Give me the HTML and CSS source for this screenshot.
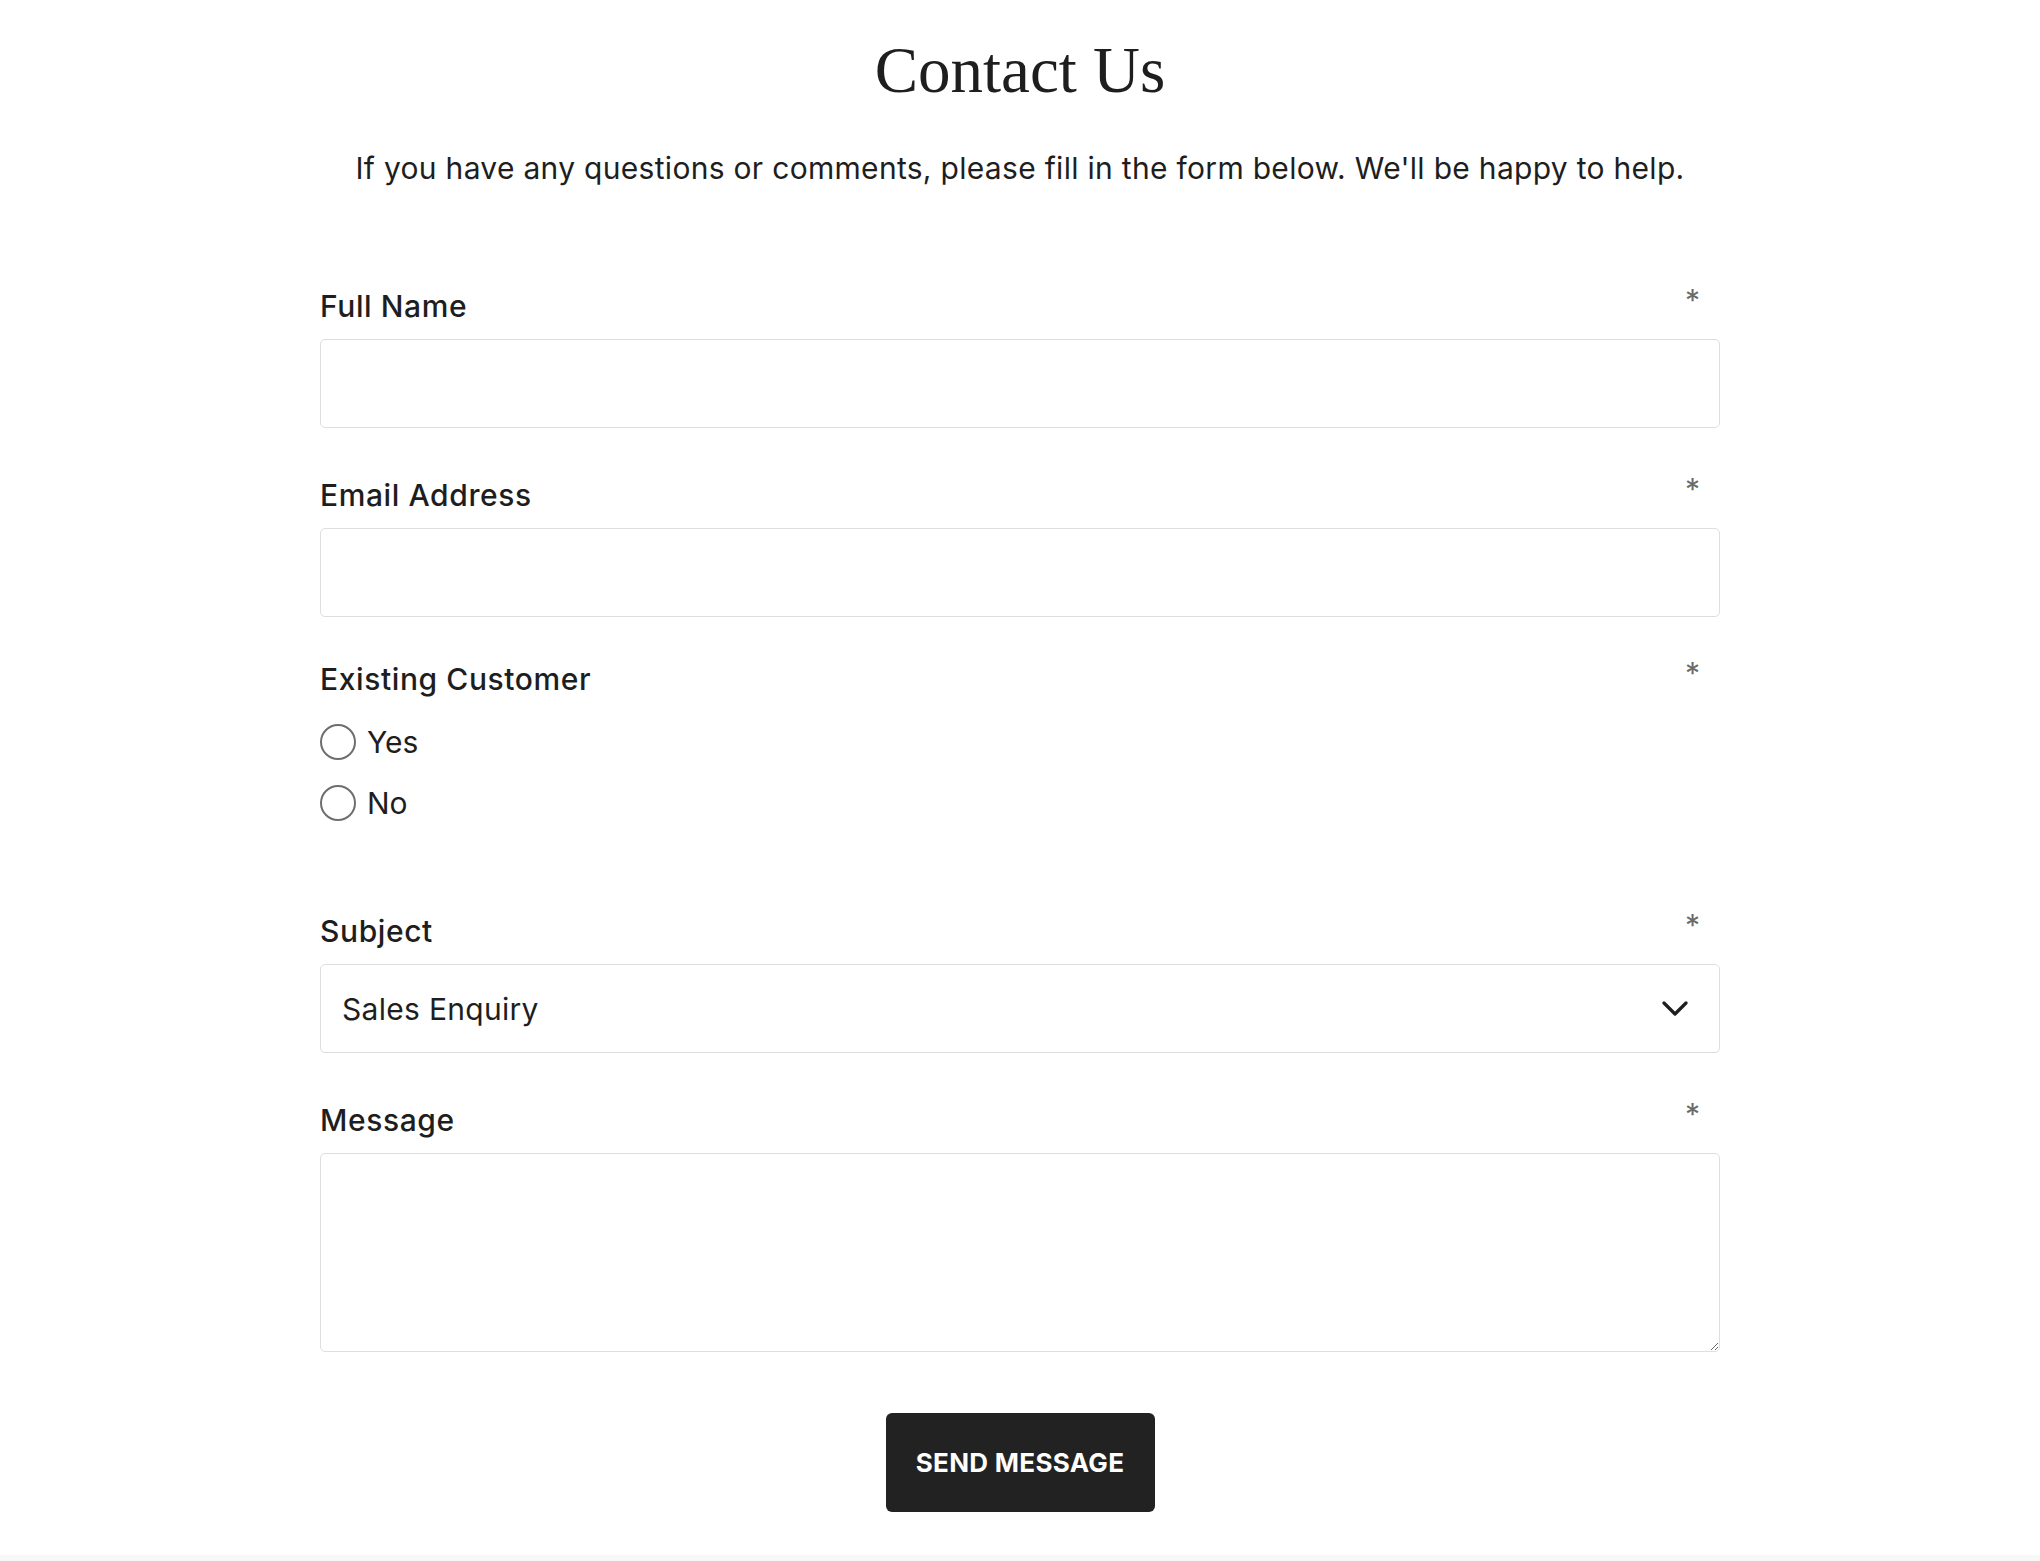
FILE: index.html
```html
<!DOCTYPE html>
<html lang="en">
<head>
<meta charset="utf-8">
<title>Contact Us</title>
<link rel="stylesheet" href="styles.css">
</head>
<body>
<main class="page">
  <h1 class="title">Contact Us</h1>
  <p class="intro">If you have any questions or comments, please fill in the form below. We'll be happy to help.</p>

  <form class="form">
    <div class="field">
      <div class="field-head"><label class="label" for="name">Full Name</label><span class="req">*</span></div>
      <input class="control" id="name" type="text">
    </div>

    <div class="field">
      <div class="field-head"><label class="label" for="email">Email Address</label><span class="req">*</span></div>
      <input class="control" id="email" type="email">
    </div>

    <div class="field field-radio">
      <div class="field-head"><span class="label">Existing Customer</span><span class="req">*</span></div>
      <div class="radios">
        <label class="radio"><input type="radio" name="cust" class="radio-input"><span>Yes</span></label>
        <label class="radio"><input type="radio" name="cust" class="radio-input"><span>No</span></label>
      </div>
    </div>

    <div class="field">
      <div class="field-head"><label class="label" for="subject">Subject</label><span class="req">*</span></div>
      <div class="select">
        <span class="select-value">Sales Enquiry</span>
        <svg class="chevron" width="26" height="16" viewBox="0 0 26 16"><polyline points="2,2 13,13 24,2" fill="none" stroke="#1e1e1e" stroke-width="3.2" stroke-linecap="round" stroke-linejoin="round"/></svg>
      </div>
    </div>

    <div class="field">
      <div class="field-head"><label class="label" for="msg">Message</label><span class="req">*</span></div>
      <textarea class="control area" id="msg"></textarea>
    </div>

    <div class="actions">
      <button type="button" class="btn">SEND MESSAGE</button>
    </div>
  </form>
</main>
<div class="footer-band"></div>
</body>
</html>
```

FILE: styles.css
```css
html, body {
  margin: 0;
  padding: 0;
  background: #ffffff;
}

body {
  font-family: Inter, "Noto Sans", "Liberation Sans", sans-serif;
  color: #1e1e1e;
}

.page {
  width: 1400px;
  margin: 0 auto;
  padding-top: 32px;
}

.title {
  font-family: "Liberation Serif", "DejaVu Serif", serif;
  font-weight: 400;
  font-size: 65px;
  line-height: 77px;
  text-align: center;
  margin: 0;
  color: #1e1e1e;
}

.intro {
  font-size: 30px;
  line-height: 45px;
  text-align: center;
  margin: 37px 0 0;
  letter-spacing: 0.3px;
  color: #1e1e1e;
}

.form {
  margin-top: 97px;
  display: flex;
  flex-direction: column;
}

.field {
  display: flex;
  flex-direction: column;
  margin-bottom: 49px;
}

.field-head {
  display: flex;
  justify-content: space-between;
  align-items: flex-start;
  height: 36px;
  margin-bottom: 15px;
}

.label {
  font-size: 30px;
  line-height: 36px;
  font-weight: 500;
  letter-spacing: 0.6px;
  color: #1e1e1e;
}

.req {
  font-size: 30px;
  line-height: 30px;
  color: #6a6a6a;
  margin-top: -3px;
  margin-right: 20px;
}

.control {
  box-sizing: border-box;
  width: 100%;
  height: 89px;
  margin: 0;
  border: 1.5px solid #dedede;
  border-radius: 5px;
  background: #fff;
  font: inherit;
  font-size: 30px;
  padding: 0 20px;
  outline: none;
}

.area {
  height: 199px;
  padding: 20px;
  resize: vertical;
  display: block;
}

.field-radio {
  margin-top: -5px;
  margin-bottom: 0;
}

.radios {
  display: flex;
  flex-direction: column;
  gap: 25px;
  margin-top: 12px;
}

.radio {
  display: flex;
  align-items: center;
  gap: 11px;
  font-size: 30px;
  line-height: 36px;
  color: #1e1e1e;
}

.radio-input {
  appearance: none;
  -webkit-appearance: none;
  margin: 0;
  width: 36px;
  height: 36px;
  box-sizing: border-box;
  border: 2px solid #6e6e6e;
  border-radius: 50%;
  background: #fff;
}

.field-radio + .field {
  margin-top: 92px;
}

.select {
  box-sizing: border-box;
  height: 89px;
  border: 1.5px solid #dedede;
  border-radius: 5px;
  display: flex;
  align-items: center;
  justify-content: space-between;
  padding: 0 31px 0 21px;
}

.select-value {
  font-size: 30px;
  letter-spacing: 0.3px;
  color: #1e1e1e;
}

.chevron {
  display: block;
}

.actions {
  display: flex;
  justify-content: center;
  margin-top: 12px;
}

.btn {
  width: 269px;
  height: 99px;
  background: #222222;
  color: #ffffff;
  border: none;
  border-radius: 6px;
  font-family: Inter, "Noto Sans", sans-serif;
  font-size: 26px;
  font-weight: 700;
  letter-spacing: 0.3px;
  cursor: pointer;
}

.footer-band {
  margin-top: 43px;
  height: 20px;
  background: #f8f8f8;
}
```
